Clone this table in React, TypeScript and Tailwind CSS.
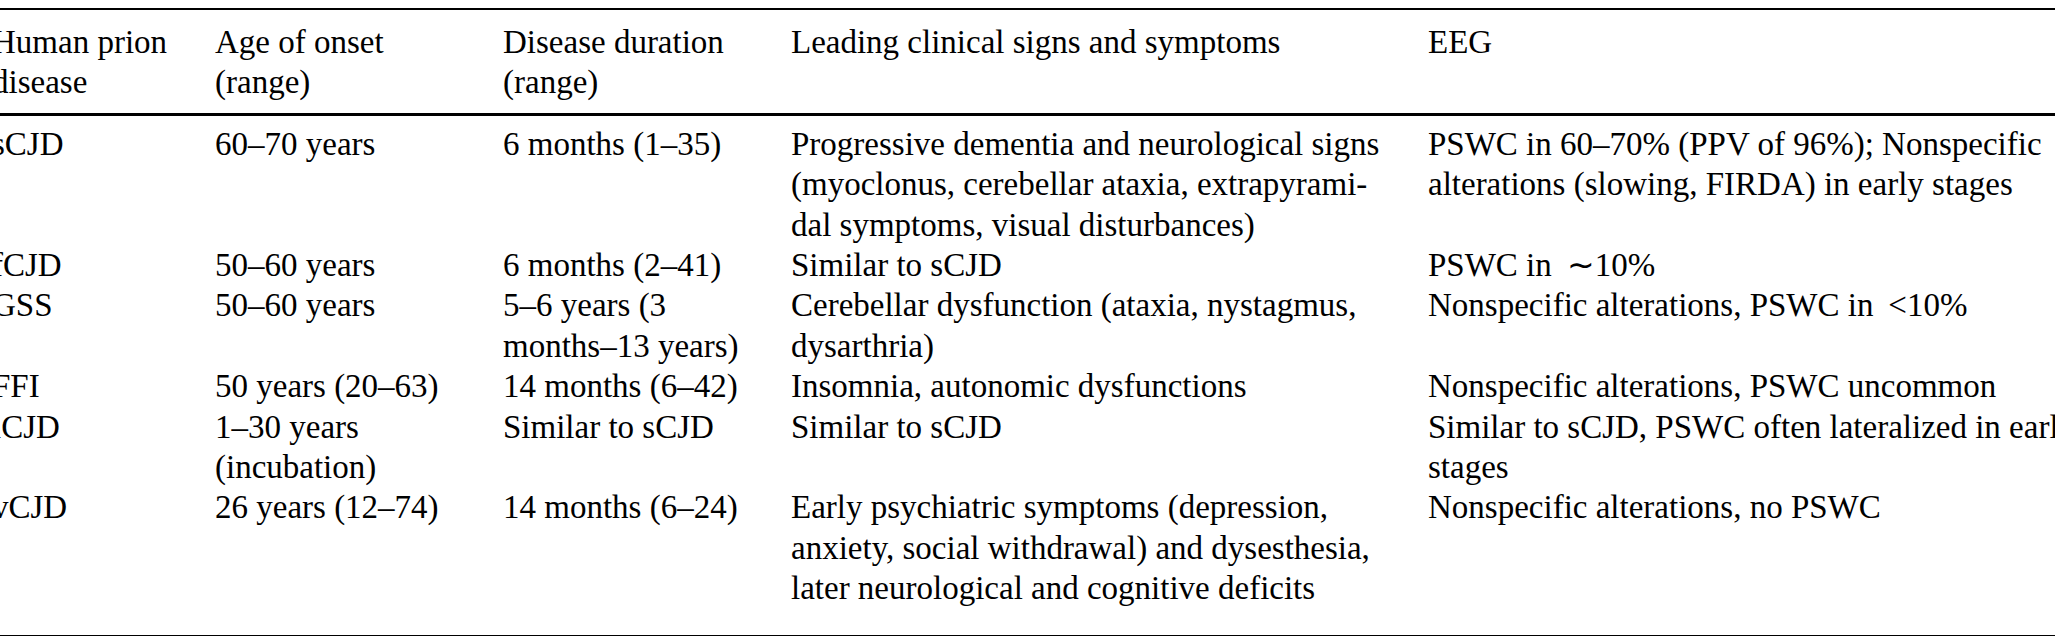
import React from "react";

type Row = string[][];

const header: Row = [
  ["Human prion", "disease"],
  ["Age of onset", "(range)"],
  ["Disease duration", "(range)"],
  ["Leading clinical signs and symptoms"],
  ["EEG"],
];

const rows: Row[] = [
  [
    ["sCJD"],
    ["60–70 years"],
    ["6 months (1–35)"],
    [
      "Progressive dementia and neurological signs",
      "(myoclonus, cerebellar ataxia, extrapyrami-",
      "dal symptoms, visual disturbances)",
    ],
    [
      "PSWC in 60–70% (PPV of 96%); Nonspecific",
      "alterations (slowing, FIRDA) in early stages",
    ],
  ],
  [
    ["fCJD"],
    ["50–60 years"],
    ["6 months (2–41)"],
    ["Similar to sCJD"],
    ["PSWC in\u00a0\u2009∼10%"],
  ],
  [
    ["GSS"],
    ["50–60 years"],
    ["5–6 years (3", "months–13 years)"],
    ["Cerebellar dysfunction (ataxia, nystagmus,", "dysarthria)"],
    ["Nonspecific alterations, PSWC in\u00a0\u2009<10%"],
  ],
  [
    ["FFI"],
    ["50 years (20–63)"],
    ["14 months (6–42)"],
    ["Insomnia, autonomic dysfunctions"],
    ["Nonspecific alterations, PSWC uncommon"],
  ],
  [
    ["iCJD"],
    ["1–30 years", "(incubation)"],
    ["Similar to sCJD"],
    ["Similar to sCJD"],
    ["Similar to sCJD, PSWC often lateralized in early", "stages"],
  ],
  [
    ["vCJD"],
    ["26 years (12–74)"],
    ["14 months (6–24)"],
    [
      "Early psychiatric symptoms (depression,",
      "anxiety, social withdrawal) and dysesthesia,",
      "later neurological and cognitive deficits",
    ],
    ["Nonspecific alterations, no PSWC"],
  ],
];

function Cell({ lines }: { lines: string[] }) {
  return (
    <div className="flex flex-col">
      {lines.map((l, i) => (
        <div key={i} className="whitespace-nowrap">
          {l}
        </div>
      ))}
    </div>
  );
}

function GridRow({ row }: { row: Row }) {
  return (
    <div className="grid grid-cols-[223px_288px_288px_637px_800px]">
      {row.map((c, i) => (
        <Cell key={i} lines={c} />
      ))}
    </div>
  );
}

export default function App() {
  return (
    <div className="w-full h-[641px] overflow-hidden bg-white text-black">
      <div className="w-max -ml-2 pt-2 font-['Liberation_Serif','Times_New_Roman',serif] text-[33px] leading-[40.4px]">
        <div className="border-t-2 border-black pt-3 pb-[10px] border-b-[3px]">
          <GridRow row={header} />
        </div>
        <div className="pt-2 pb-[26px] border-b border-black">
          {rows.map((r, i) => (
            <GridRow key={i} row={r} />
          ))}
        </div>
      </div>
    </div>
  );
}
